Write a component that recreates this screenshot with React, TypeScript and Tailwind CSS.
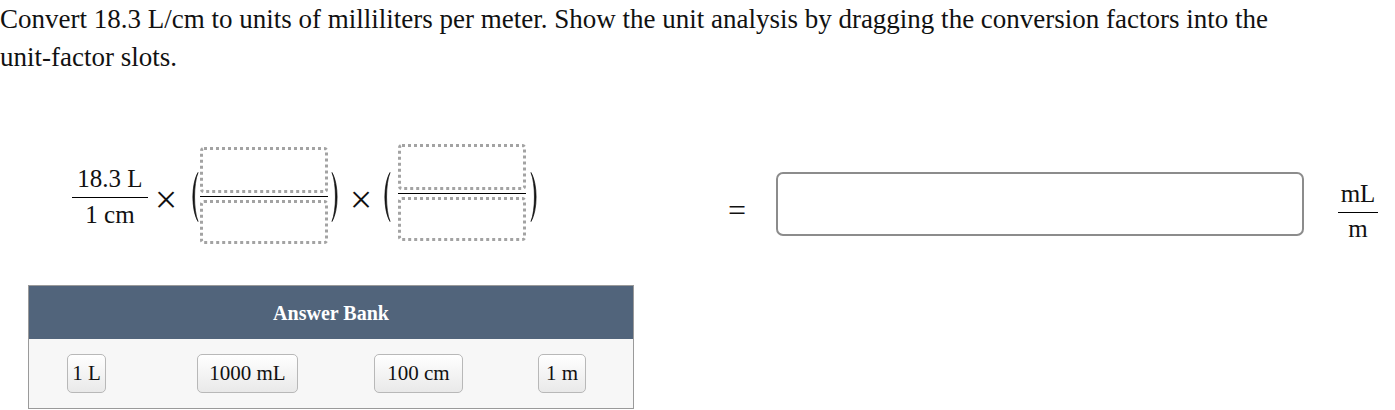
const BANK = [
  { label: '1 L', cls: 'ml-[38px] w-[39px]' },
  { label: '1000 mL', cls: 'ml-[91px] w-[101px]' },
  { label: '100 cm', cls: 'ml-[76px] w-[89px]' },
  { label: '1 m', cls: 'ml-[75px] w-[48px]' },
]

function Paren({ right = false }: { right?: boolean }) {
  return (
    <svg width="9" height="50" viewBox="0 0 9 50" className={right ? 'scale-x-[-1]' : ''}>
      <path d="M8 0.5 C1.2 12 1.2 38 8 49.5 C3.4 38 3.4 12 8 0.5 Z" fill="#111" stroke="#111" strokeWidth="0.7" />
    </svg>
  )
}

function Times() {
  return <div className="w-[18px] h-[20px] mt-[46px] flex items-center justify-center text-[40px] leading-[20px]">×</div>
}

function Slots({ top }: { top: string }) {
  return (
    <div className={`flex flex-col w-[128px] ${top}`}>
      <div className="h-[46px] border-[3px] border-dotted border-[#a3a3a3] rounded-[4px]" />
      <div className="h-px bg-black mt-[3px]" />
      <div className="h-[44px] border-[3px] border-dotted border-[#a3a3a3] rounded-[4px] mt-[3px]" />
    </div>
  )
}

export default function App() {
  return (
    <div className="w-[1395px] h-[410px] overflow-hidden bg-white text-[#111] font-['Liberation_Serif',serif]">
      <p className="max-w-[1320px] text-[27px] leading-[38px]">
        Convert 18.3 L/cm to units of milliliters per meter. Show the unit analysis by dragging the conversion
        factors into the unit-factor slots.
      </p>

      <div className="flex items-start h-[102px] mt-[68px]">
        <div className="ml-[72px] mt-[23px] w-[76px] flex flex-col items-center text-[25px]">
          <div className="h-[24px] leading-[24px]">18.3 L</div>
          <div className="w-full h-px bg-black mt-[6px]" />
          <div className="h-[24px] leading-[24px] mt-[5px]">1 cm</div>
        </div>
        <div className="ml-[9px]"><Times /></div>
        <div className="ml-[15px] mt-[28px]"><Paren /></div>
        <div className="ml-px"><Slots top="mt-[3px]" /></div>
        <div className="ml-[3px] mt-[28px]"><Paren right /></div>
        <div className="ml-[12px]"><Times /></div>
        <div className="ml-[12px] mt-[28px]"><Paren /></div>
        <div className="ml-[7px]"><Slots top="mt-0" /></div>
        <div className="ml-[4px] mt-[28px]"><Paren right /></div>

        <div className="ml-[188px] mt-[56px] w-[20px] h-[20px] flex items-center justify-center text-[32px] leading-[20px]">=</div>
        <div className="ml-[29px] mt-[28px] w-[528px] h-[64px] border-[2.5px] border-[#8c8c8c] rounded-[7px] bg-white" />
        <div className="ml-[34px] mt-[38px] w-[40px] flex flex-col items-center text-[25px]">
          <div className="h-[24px] leading-[24px]">mL</div>
          <div className="w-full h-px bg-black mt-[6px]" />
          <div className="h-[24px] leading-[24px] mt-[4px]">m</div>
        </div>
      </div>

      <div className="ml-[28px] mt-[39px] w-[606px] border border-[#9a9a9a]">
        <div className="h-[53px] bg-[#51647b] flex items-center justify-center text-white text-[20px] font-bold">
          Answer Bank
        </div>
        <div className="h-[69px] bg-[#f7f7f7] flex items-center">
          {BANK.map(({ label, cls }) => (
            <div
              key={label}
              className={`${cls} h-[39px] flex items-center justify-center border border-[#b8b8b8] rounded-[5px] bg-gradient-to-b from-white to-[#e9e9e9] text-[21px]`}
            >
              {label}
            </div>
          ))}
        </div>
      </div>
    </div>
  )
}
